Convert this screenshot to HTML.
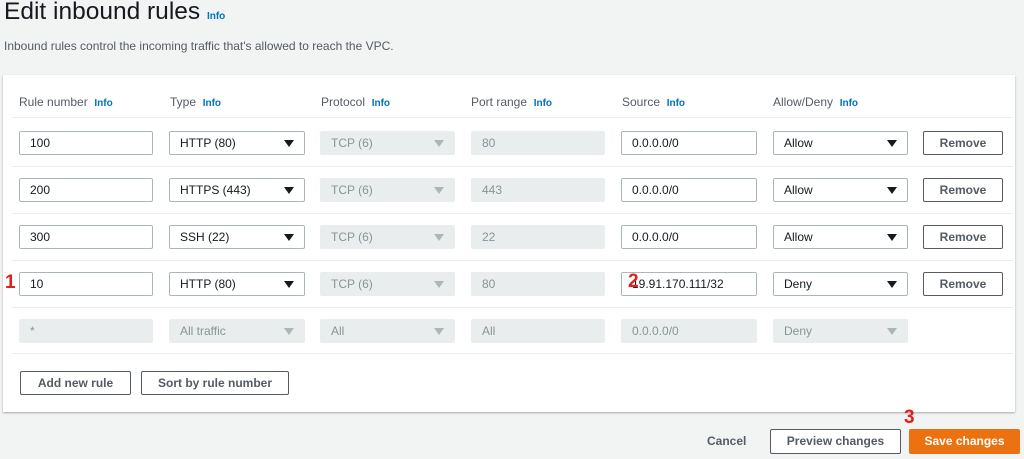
<!DOCTYPE html><html><head><style>
body{margin:0;width:1024px;height:459px;background:#f2f3f3;font-family:"Liberation Sans",sans-serif;position:relative;overflow:hidden;color:#16191f}
.a{position:absolute}
h1{position:absolute;left:4px;top:-2px;margin:0;font-weight:normal;font-size:24.5px;color:#16191f}
.info{color:#0073bb;font-weight:bold;font-size:10px}
.panel{left:3px;top:75px;width:1012px;height:337px;background:#fff;box-shadow:0 1px 2px rgba(0,0,0,.3)}
.hd{font-size:12px;color:#545b64;top:95px}
.sep{left:12px;width:1001px;height:1px;background:#eaeded}
.in{height:22px;border:1px solid #aab7b8;box-sizing:content-box;font-size:12px;line-height:22px;padding-left:10px;background:#fff;border-radius:2px}
.dis{background:#eaeded;border-color:#eaeded;color:#879596}
.arr{position:absolute;right:10px;top:8px;width:0;height:0;border-left:5px solid transparent;border-right:5px solid transparent;border-top:7px solid #16191f}
.dis .arr{border-top-color:#aab7b8}
.btn{border:1px solid #545b64;background:#fff;font-weight:bold;font-size:12px;color:#545b64;text-align:center;border-radius:2px;box-sizing:border-box}
.red{color:#e0201b;font-weight:bold;font-size:19px}
</style></head><body>
<h1>Edit inbound rules <span class="info" style="font-size:10px">Info</span></h1>
<div class="a" style="left:4px;top:39px;font-size:12px;color:#545b64">Inbound rules control the incoming traffic that's allowed to reach the VPC.</div>
<div class="a panel"></div>
<div class="a hd" style="left:19px">Rule number &nbsp;<span class="info">Info</span></div>
<div class="a hd" style="left:170px">Type &nbsp;<span class="info">Info</span></div>
<div class="a hd" style="left:321px">Protocol &nbsp;<span class="info">Info</span></div>
<div class="a hd" style="left:471px">Port range &nbsp;<span class="info">Info</span></div>
<div class="a hd" style="left:622px">Source &nbsp;<span class="info">Info</span></div>
<div class="a hd" style="left:773px">Allow/Deny &nbsp;<span class="info">Info</span></div>
<div class="a sep" style="top:117px"></div>
<div class="a sep" style="top:166px"></div>
<div class="a sep" style="top:213px"></div>
<div class="a sep" style="top:260px"></div>
<div class="a sep" style="top:307px"></div>
<div class="a sep" style="top:353px"></div>

<div class="a in" style="left:19px;top:131px;width:122px">100</div>
<div class="a in" style="left:169px;top:131px;width:124px">HTTP (80)<i class="arr"></i></div>
<div class="a in dis" style="left:320px;top:131px;width:123px">TCP (6)<i class="arr"></i></div>
<div class="a in dis" style="left:471px;top:131px;width:122px">80</div>
<div class="a in" style="left:621px;top:131px;width:124px">0.0.0.0/0</div>
<div class="a in" style="left:773px;top:131px;width:123px">Allow<i class="arr"></i></div>
<div class="a btn" style="left:923px;top:131px;width:80px;height:24px;line-height:22px">Remove</div>

<div class="a in" style="left:19px;top:178px;width:122px">200</div>
<div class="a in" style="left:169px;top:178px;width:124px">HTTPS (443)<i class="arr"></i></div>
<div class="a in dis" style="left:320px;top:178px;width:123px">TCP (6)<i class="arr"></i></div>
<div class="a in dis" style="left:471px;top:178px;width:122px">443</div>
<div class="a in" style="left:621px;top:178px;width:124px">0.0.0.0/0</div>
<div class="a in" style="left:773px;top:178px;width:123px">Allow<i class="arr"></i></div>
<div class="a btn" style="left:923px;top:178px;width:80px;height:24px;line-height:22px">Remove</div>

<div class="a in" style="left:19px;top:225px;width:122px">300</div>
<div class="a in" style="left:169px;top:225px;width:124px">SSH (22)<i class="arr"></i></div>
<div class="a in dis" style="left:320px;top:225px;width:123px">TCP (6)<i class="arr"></i></div>
<div class="a in dis" style="left:471px;top:225px;width:122px">22</div>
<div class="a in" style="left:621px;top:225px;width:124px">0.0.0.0/0</div>
<div class="a in" style="left:773px;top:225px;width:123px">Allow<i class="arr"></i></div>
<div class="a btn" style="left:923px;top:225px;width:80px;height:24px;line-height:22px">Remove</div>

<div class="a in" style="left:19px;top:272px;width:122px">10</div>
<div class="a in" style="left:169px;top:272px;width:124px">HTTP (80)<i class="arr"></i></div>
<div class="a in dis" style="left:320px;top:272px;width:123px">TCP (6)<i class="arr"></i></div>
<div class="a in dis" style="left:471px;top:272px;width:122px">80</div>
<div class="a in" style="left:621px;top:272px;width:124px">19.91.170.111/32</div>
<div class="a in" style="left:773px;top:272px;width:123px">Deny<i class="arr"></i></div>
<div class="a btn" style="left:923px;top:272px;width:80px;height:24px;line-height:22px">Remove</div>

<div class="a in dis" style="left:19px;top:319px;width:122px">*</div>
<div class="a in dis" style="left:169px;top:319px;width:124px">All traffic<i class="arr"></i></div>
<div class="a in dis" style="left:320px;top:319px;width:123px">All<i class="arr"></i></div>
<div class="a in dis" style="left:471px;top:319px;width:122px">All</div>
<div class="a in dis" style="left:621px;top:319px;width:124px">0.0.0.0/0</div>
<div class="a in dis" style="left:773px;top:319px;width:123px">Deny<i class="arr"></i></div>

<div class="a btn" style="left:20px;top:371px;width:111px;height:24px;line-height:22px">Add new rule</div>
<div class="a btn" style="left:141px;top:371px;width:148px;height:24px;line-height:22px">Sort by rule number</div>

<div class="a" style="left:707px;top:434px;font-size:12px;font-weight:bold;color:#545b64">Cancel</div>
<div class="a btn" style="left:770px;top:429px;width:131px;height:25px;line-height:23px">Preview changes</div>
<div class="a btn" style="left:909px;top:429px;width:111px;height:25px;line-height:23px;background:#ec7211;border-color:#ec7211;color:#fff">Save changes</div>

<div class="a red" style="left:5px;top:272px">1</div>
<div class="a red" style="left:628px;top:271px">2</div>
<div class="a red" style="left:904px;top:407px">3</div>
</body></html>
